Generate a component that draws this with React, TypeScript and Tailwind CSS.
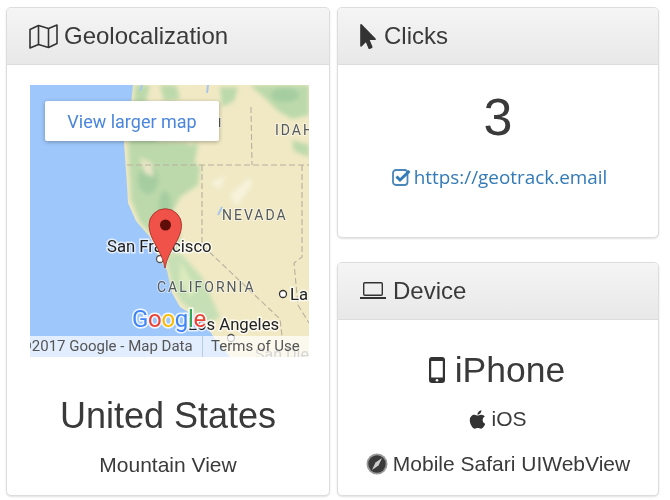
import { FaApple, FaMousePointer } from 'react-icons/fa';

const MapIcon = () => (
  <svg width="29" height="25" viewBox="0 0 29 25" fill="none" stroke="#333" strokeWidth="1.6" strokeLinejoin="round">
    <path d="M1 5.5 L9.5 1.5 L19.5 4.5 L28 1 V19.5 L19.5 23.5 L9.5 20.5 L1 24 Z" />
    <path d="M9.5 1.5 V20.5 M19.5 4.5 V23.5" />
  </svg>
);

const LaptopIcon = () => (
  <svg width="26" height="18" viewBox="0 0 26 18" fill="none" stroke="#333">
    <rect x="3.7" y="0.7" width="18.6" height="12.6" rx="1" strokeWidth="1.4" />
    <path d="M0 16 H26" strokeWidth="2.2" />
  </svg>
);

const PhoneIcon = () => (
  <svg width="16" height="26" viewBox="0 0 16 26">
    <rect x="0" y="0" width="16" height="26" rx="3" fill="#333" />
    <rect x="2.2" y="4" width="11.6" height="16.5" fill="#fff" />
    <circle cx="8" cy="23.2" r="1.3" fill="#fff" />
  </svg>
);

const CheckIcon = () => (
  <svg width="19" height="18" viewBox="0 0 19 18" fill="none" stroke="#4a86b8">
    <rect x="1" y="2" width="14.5" height="15" rx="3" strokeWidth="1.8" />
    <path d="M4.5 8.5 L8 12 L17.5 3" strokeWidth="3" stroke="#337ab7" />
  </svg>
);

const SafariIcon = () => (
  <svg width="22" height="22" viewBox="0 0 22 22">
    <circle cx="11" cy="11" r="10.5" fill="#999" />
    <circle cx="11" cy="11" r="8.7" fill="#3a3a3a" />
    <path d="M16 5 L12.5 12.5 L6 17 L9.5 9.5 Z" fill="#ccc" />
  </svg>
);

const labelFont = { fontFamily: 'Roboto, sans-serif' };

const MapDrawing = () => (
  <svg width="279" height="272" viewBox="0 0 279 272" className="block" style={labelFont}>
    <defs>
      <filter id="soft" x="-5%" y="-5%" width="110%" height="110%">
        <feGaussianBlur stdDeviation="2.2" />
      </filter>
      <filter id="softer">
        <feGaussianBlur stdDeviation="0.5" />
      </filter>
    </defs>
    <rect width="279" height="272" fill="#9ec7fb" />
    {/* land */}
    <path
      d="M103 0 L100 30 L94 58 L97 100 L98 118 L106 136 L120 152 L130 175 L137 185 L142 208 L150 222 L173 236 L183 251 L200 272 H279 V0 Z"
      fill="#f0e9c4"
    />
    {/* forest */}
    <g filter="url(#soft)" fill="#bcd9ab">
      <path d="M105 0 L103 40 L98 60 L101 115 L110 137 L124 152 L134 172 L148 168 L150 150 L142 128 L150 112 L168 100 L170 82 L156 70 L158 58 L128 56 L110 40 L120 0 Z" />
      <path d="M130 0 L146 0 L150 14 L134 16 Z" />
      <path d="M168 58 L150 62 L148 80 L165 76 Z" />
      <path d="M190 2 L208 2 L204 16 L192 22 Z" />
      <path d="M220 0 L279 0 L279 30 L262 34 L248 26 L236 14 Z" />
      <path d="M262 55 L279 60 L279 72 L264 66 Z" />
    </g>
    <g filter="url(#soft)" fill="#a5cda0">
      <ellipse cx="255" cy="10" rx="14" ry="7" />
      <ellipse cx="118" cy="95" rx="10" ry="14" />
      <ellipse cx="135" cy="120" rx="6" ry="14" />
    </g>
    {/* central valley and coast range */}
    <g filter="url(#soft)">
      <path d="M136 172 L150 168 L172 192 L190 232 L178 238 L152 218 L142 200 Z" fill="#c6dfb4" />
      <path d="M150 176 L166 204 L160 212 L150 194 Z" fill="#ddebbf" />
      <path d="M110 72 L122 78 L124 92 L114 88 Z" fill="#e8e6c4" />
      <path d="M200 110 L220 92 L222 100 L206 122 Z" fill="#f7f3dc" />
      <path d="M180 98 L196 90 L190 104 Z" fill="#f7f3dc" />
    </g>
    <path d="M112 0 L110 6 M178 0 L177 8 M192 122 L188 130" stroke="#a9c7ea" strokeWidth="2" filter="url(#softer)" />
    {/* state borders */}
    <g stroke="#b8b09e" strokeWidth="1.1" strokeDasharray="6 3" fill="none" filter="url(#softer)">
      <path d="M97 80 H279" />
      <path d="M172 80 V160 L250 234 L252 251" />
      <path d="M221 22 L222 80" />
      <path d="M272 80 V172 L264 178 L268 220 L279 238" />
    </g>
    {/* labels */}
    <g fill="#555a5e" fontSize="14" letterSpacing="2" stroke="#fff" strokeWidth="2" paintOrder="stroke" strokeOpacity="0.45">
      <text x="245" y="50">IDAHO</text>
      <text x="192" y="135">NEVADA</text>
      <text x="127" y="207">CALIFORNIA</text>
      <text x="182" y="42" fontSize="13">N</text>
    </g>
    <g fill="#222" fontSize="16.7" stroke="#fff" strokeWidth="3" paintOrder="stroke" strokeOpacity="0.7">
      <text x="77" y="167">San Francisco</text>
      <text x="158" y="245">Los Angeles</text>
      <text x="260" y="215">La</text>
    </g>
    <circle cx="253" cy="209" r="3.5" fill="#fff" stroke="#333" strokeWidth="1.3" />
    <circle cx="130" cy="174" r="3.5" fill="#fff" stroke="#555" strokeWidth="1.3" />
    <circle cx="201" cy="253" r="3.5" fill="#fff" stroke="#555" strokeWidth="1.3" />
    {/* google logo */}
    <text x="102" y="242" fontSize="24" letterSpacing="-0.3" stroke="#fff" strokeWidth="3" paintOrder="stroke" strokeOpacity="0.85">
      <tspan fill="#4285f4">G</tspan>
      <tspan fill="#ea4335">o</tspan>
      <tspan fill="#fbbc05">o</tspan>
      <tspan fill="#4285f4">g</tspan>
      <tspan fill="#34a853">l</tspan>
      <tspan fill="#ea4335">e</tspan>
    </text>
    {/* pin */}
    <path
      d="M135 183 C132 165 119 155 119 140 A16.3 16.3 0 0 1 151.6 140 C151.6 155 138 165 135 183 Z"
      fill="#f0524a"
      stroke="#9e2a22"
      strokeWidth="0.8"
    />
    <circle cx="135.5" cy="140" r="5.5" fill="#5e0d08" />
    <text x="225" y="275" fontSize="16" fill="#777">San Die</text>
  </svg>
);

const PanelHeader = ({ icon, title, gap }: { icon: React.ReactNode; title: string; gap: string }) => (
  <div className={`flex items-center ${gap} h-[57px] pl-[22px] bg-gradient-to-b from-[#f5f5f5] to-[#e8e8e8] border-b border-[#ddd] text-[24px] leading-none`}>
    {icon}
    <span>{title}</span>
  </div>
);

const Panel = ({ className, children }: { className: string; children: React.ReactNode }) => (
  <div className={`bg-white border border-[#ddd] rounded-[5px] shadow-[0_1px_2px_rgba(0,0,0,0.12)] overflow-hidden ${className}`}>
    {children}
  </div>
);

export default function App() {
  return (
    <div className="w-[670px] h-[500px] bg-white overflow-hidden pt-[7px] pl-[6px] flex gap-[7px] text-[#3a3a3a] font-['Liberation_Sans',Arial,sans-serif] blur-[0.4px]">
      <Panel className="w-[324px] h-[489px]">
        <PanelHeader icon={<MapIcon />} title="Geolocalization" gap="gap-[6px]" />
        <div className="pt-[20px] pl-[23px]">
          <div className="relative w-[279px] h-[272px] overflow-hidden">
            <MapDrawing />
            <div className="absolute left-[15px] top-[16px] w-[174px] h-[40px] flex items-center justify-center bg-white rounded-[2px] shadow-[0_1px_4px_rgba(0,0,0,0.3)] font-['Roboto',sans-serif] text-[18px] text-[#4a86dc]">
              View larger map
            </div>
            <div className="absolute left-0 right-0 bottom-0 h-[21px] flex items-center bg-white/70 font-['Roboto',sans-serif] text-[15px] text-[#555] whitespace-nowrap">
              <span className="ml-[-10px] w-[183px] pr-[10px] text-right border-r border-[#b8cde8] leading-[21px]">©2017 Google - Map Data</span>
              <span className="pl-[8px]">Terms of Use</span>
            </div>
          </div>
        </div>
        <div className="mt-[37px] text-center text-[36px] leading-[44px]">United States</div>
        <div className="mt-[15px] text-center text-[21px] leading-[24px]">Mountain View</div>
      </Panel>
      <div className="w-[322px] flex flex-col gap-[24px]">
        <Panel className="h-[231px]">
          <PanelHeader icon={<FaMousePointer color="#333" className="w-[16px] h-[25px]" />} title="Clicks" gap="gap-[8px]" />
          <div className="mt-[20px] text-center text-[52px] leading-[64px]">3</div>
          <div className="mt-[14px] pl-[3px] flex items-center justify-center gap-[3px] font-['Open_Sans',sans-serif] text-[18.9px] text-[#337ab7]">
            <CheckIcon />
            <span>https://geotrack.email</span>
          </div>
        </Panel>
        <Panel className="h-[234px]">
          <PanelHeader icon={<LaptopIcon />} title="Device" gap="gap-[7px]" />
          <div className="mt-[28px] pr-[2px] flex items-center justify-center gap-[10px] text-[35.5px] leading-[44px]">
            <PhoneIcon />
            <span>iPhone</span>
          </div>
          <div className="mt-[15px] flex items-center justify-center gap-[5px] text-[21px] leading-[24px]">
            <FaApple color="#333" className="w-[17px] h-[21px]" />
            <span>iOS</span>
          </div>
          <div className="mt-[21px] flex items-center justify-center gap-[5px] text-[21px] leading-[24px]">
            <SafariIcon />
            <span>Mobile Safari UIWebView</span>
          </div>
        </Panel>
      </div>
    </div>
  );
}
